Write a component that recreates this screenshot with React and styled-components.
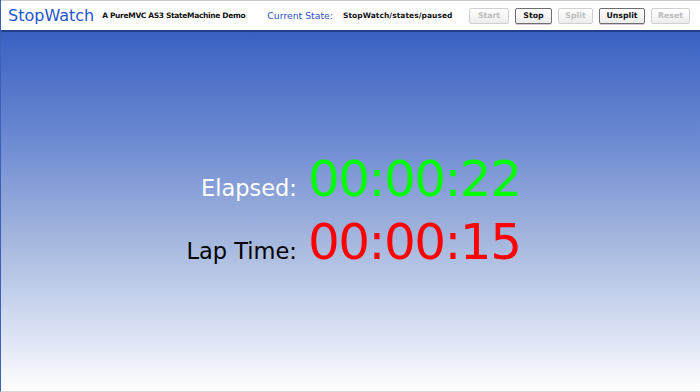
import React from "react";
import styled, { createGlobalStyle } from "styled-components";

const Global = createGlobalStyle`
  html, body { margin: 0; padding: 0; }
  body { font-family: "DejaVu Sans", Verdana, sans-serif; }
`;

const Page = styled.div`
  width: 700px;
  height: 392px;
  box-sizing: border-box;
  display: flex;
  flex-direction: column;
  border-left: 1px solid #3c5fb8;
  border-bottom: 1px solid #d8d8d8;
  overflow: hidden;
`;

const Header = styled.header`
  height: 32px;
  flex-shrink: 0;
  box-sizing: border-box;
  border-top: 1px solid #c8c8c8;
  background: #ffffff;
  display: flex;
  align-items: center;
  padding: 0 10px 0 7px;
  border-bottom: 2px solid #243f8c;
  white-space: nowrap;
`;

const Title = styled.div`
  font-size: 16px;
  color: #1f56d0;
  margin-right: 8px;
`;

const Sub = styled.div`
  font-size: 7.5px;
  font-weight: bold;
  color: #111;
  letter-spacing: -0.33px;
`;

const StateLabel = styled.div`
  font-size: 9.3px;
  color: #2b55c4;
  margin-left: 22px;
`;

const StateValue = styled.div`
  font-size: 7.5px;
  font-weight: bold;
  color: #111;
  margin-left: 10px;
  letter-spacing: 0.05px;
`;

const Buttons = styled.div`
  margin-left: auto;
  display: flex;
  gap: 6px;
`;

const Btn = styled.button`
  height: 16px;
  width: ${(p) => p.$w}px;
  padding: 0;
  font-family: "DejaVu Sans", Verdana, sans-serif;
  font-size: 7.8px;
  font-weight: bold;
  border-radius: 2px;
  background: linear-gradient(#ffffff, #ececec);
  border: 1px solid ${(p) => (p.disabled ? "#d0d0d0" : "#6e6e6e")};
  color: ${(p) => (p.disabled ? "#bcbcbc" : "#111")};
  box-shadow: ${(p) => (p.disabled ? "none" : "0 1px 0 #cfcfcf")};
  display: flex;
  align-items: center;
  justify-content: center;
`;

const Main = styled.main`
  flex: 1;
  background: linear-gradient(#3961c2 0%, #6d8ad2 30%, #a8badf 60%, #dde4f5 85%, #ffffff 100%);
  display: flex;
  align-items: center;
  justify-content: center;
  padding-left: 6px;
`;

const Grid = styled.div`
  display: grid;
  grid-template-columns: auto auto;
  column-gap: 11px;
  row-gap: 3px;
  align-items: baseline;
  margin-top: -2px;
`;

const Label = styled.div`
  font-size: 22.5px;
  text-align: right;
  color: ${(p) => p.$color};
`;

const Time = styled.div`
  font-size: 50px;
  line-height: 60px;
  letter-spacing: -1.5px;
  color: ${(p) => p.$color};
`;

export default function App() {
  return (
    <>
      <Global />
      <Page>
        <Header>
          <Title>StopWatch</Title>
          <Sub>A PureMVC AS3 StateMachine Demo</Sub>
          <StateLabel>Current State:</StateLabel>
          <StateValue>StopWatch/states/paused</StateValue>
          <Buttons>
            <Btn disabled $w={40}>Start</Btn>
            <Btn $w={37}>Stop</Btn>
            <Btn disabled $w={35}>Split</Btn>
            <Btn $w={46}>Unsplit</Btn>
            <Btn disabled $w={39}>Reset</Btn>
          </Buttons>
        </Header>
        <Main>
          <Grid>
            <Label $color="#ffffff">Elapsed:</Label>
            <Time $color="#00ff00">00:00:22</Time>
            <Label $color="#000000">Lap Time:</Label>
            <Time $color="#ff0000">00:00:15</Time>
          </Grid>
        </Main>
      </Page>
    </>
  );
}
